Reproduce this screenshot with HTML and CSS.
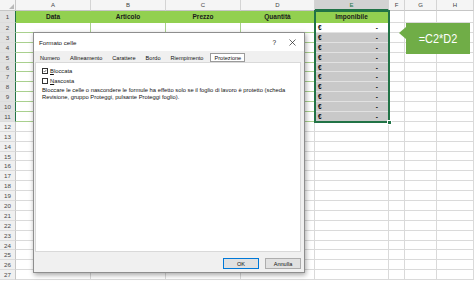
FILE: index.html
```html
<!DOCTYPE html>
<html lang="it">
<head>
<meta charset="utf-8">
<title>Formato celle</title>
<link rel="stylesheet" href="styles.css">
</head>
<body>
<div class="sheet">
  <div class="row hdr">
    <div class="rh corner"><span class="tri"></span></div>
    <div class="ch">A</div><div class="ch">B</div><div class="ch">C</div><div class="ch">D</div><div class="ch csel">E</div><div class="ch">F</div><div class="ch">G</div><div class="ch">H</div>
  </div>
  <div class="row r1">
    <div class="rh s">1</div>
    <div class="c g">Data</div><div class="c g">Articolo</div><div class="c g">Prezzo</div><div class="c g">Quantità</div><div class="c g">Imponibile</div><div class="c"></div><div class="c"></div><div class="c"></div>
  </div>
  <div class="row"><div class="rh s">2</div><div class="c t"></div><div class="c t"></div><div class="c t"></div><div class="c t"></div><div class="c e act"><span>€</span><span>-</span></div><div class="c"></div><div class="c"></div><div class="c"></div></div>
  <div class="row"><div class="rh s">3</div><div class="c t"></div><div class="c t"></div><div class="c t"></div><div class="c t"></div><div class="c e"><span>€</span><span>-</span></div><div class="c"></div><div class="c"></div><div class="c"></div></div>
  <div class="row"><div class="rh s">4</div><div class="c t"></div><div class="c t"></div><div class="c t"></div><div class="c t"></div><div class="c e"><span>€</span><span>-</span></div><div class="c"></div><div class="c"></div><div class="c"></div></div>
  <div class="row"><div class="rh s">5</div><div class="c t"></div><div class="c t"></div><div class="c t"></div><div class="c t"></div><div class="c e"><span>€</span><span>-</span></div><div class="c"></div><div class="c"></div><div class="c"></div></div>
  <div class="row"><div class="rh s">6</div><div class="c t"></div><div class="c t"></div><div class="c t"></div><div class="c t"></div><div class="c e"><span>€</span><span>-</span></div><div class="c"></div><div class="c"></div><div class="c"></div></div>
  <div class="row"><div class="rh s">7</div><div class="c t"></div><div class="c t"></div><div class="c t"></div><div class="c t"></div><div class="c e"><span>€</span><span>-</span></div><div class="c"></div><div class="c"></div><div class="c"></div></div>
  <div class="row"><div class="rh s">8</div><div class="c t"></div><div class="c t"></div><div class="c t"></div><div class="c t"></div><div class="c e"><span>€</span><span>-</span></div><div class="c"></div><div class="c"></div><div class="c"></div></div>
  <div class="row"><div class="rh s">9</div><div class="c t"></div><div class="c t"></div><div class="c t"></div><div class="c t"></div><div class="c e"><span>€</span><span>-</span></div><div class="c"></div><div class="c"></div><div class="c"></div></div>
  <div class="row"><div class="rh s">10</div><div class="c t"></div><div class="c t"></div><div class="c t"></div><div class="c t"></div><div class="c e"><span>€</span><span>-</span></div><div class="c"></div><div class="c"></div><div class="c"></div></div>
  <div class="row"><div class="rh s">11</div><div class="c t"></div><div class="c t"></div><div class="c t"></div><div class="c t"></div><div class="c e"><span>€</span><span>-</span></div><div class="c"></div><div class="c"></div><div class="c"></div></div>
  <div class="row"><div class="rh">12</div><div class="c"></div><div class="c"></div><div class="c"></div><div class="c"></div><div class="c"></div><div class="c"></div><div class="c"></div><div class="c"></div></div>
  <div class="row"><div class="rh">13</div><div class="c"></div><div class="c"></div><div class="c"></div><div class="c"></div><div class="c"></div><div class="c"></div><div class="c"></div><div class="c"></div></div>
  <div class="row"><div class="rh">14</div><div class="c"></div><div class="c"></div><div class="c"></div><div class="c"></div><div class="c"></div><div class="c"></div><div class="c"></div><div class="c"></div></div>
  <div class="row"><div class="rh">15</div><div class="c"></div><div class="c"></div><div class="c"></div><div class="c"></div><div class="c"></div><div class="c"></div><div class="c"></div><div class="c"></div></div>
  <div class="row"><div class="rh">16</div><div class="c"></div><div class="c"></div><div class="c"></div><div class="c"></div><div class="c"></div><div class="c"></div><div class="c"></div><div class="c"></div></div>
  <div class="row"><div class="rh">17</div><div class="c"></div><div class="c"></div><div class="c"></div><div class="c"></div><div class="c"></div><div class="c"></div><div class="c"></div><div class="c"></div></div>
  <div class="row"><div class="rh">18</div><div class="c"></div><div class="c"></div><div class="c"></div><div class="c"></div><div class="c"></div><div class="c"></div><div class="c"></div><div class="c"></div></div>
  <div class="row"><div class="rh">19</div><div class="c"></div><div class="c"></div><div class="c"></div><div class="c"></div><div class="c"></div><div class="c"></div><div class="c"></div><div class="c"></div></div>
  <div class="row"><div class="rh">20</div><div class="c"></div><div class="c"></div><div class="c"></div><div class="c"></div><div class="c"></div><div class="c"></div><div class="c"></div><div class="c"></div></div>
  <div class="row"><div class="rh">21</div><div class="c"></div><div class="c"></div><div class="c"></div><div class="c"></div><div class="c"></div><div class="c"></div><div class="c"></div><div class="c"></div></div>
  <div class="row"><div class="rh">22</div><div class="c"></div><div class="c"></div><div class="c"></div><div class="c"></div><div class="c"></div><div class="c"></div><div class="c"></div><div class="c"></div></div>
  <div class="row"><div class="rh">23</div><div class="c"></div><div class="c"></div><div class="c"></div><div class="c"></div><div class="c"></div><div class="c"></div><div class="c"></div><div class="c"></div></div>
  <div class="row"><div class="rh">24</div><div class="c"></div><div class="c"></div><div class="c"></div><div class="c"></div><div class="c"></div><div class="c"></div><div class="c"></div><div class="c"></div></div>
  <div class="row"><div class="rh">25</div><div class="c"></div><div class="c"></div><div class="c"></div><div class="c"></div><div class="c"></div><div class="c"></div><div class="c"></div><div class="c"></div></div>
  <div class="row"><div class="rh">26</div><div class="c"></div><div class="c"></div><div class="c"></div><div class="c"></div><div class="c"></div><div class="c"></div><div class="c"></div><div class="c"></div></div>
  <div class="row"><div class="rh">27</div><div class="c"></div><div class="c"></div><div class="c"></div><div class="c"></div><div class="c"></div><div class="c"></div><div class="c"></div><div class="c"></div></div>
</div>

<div class="selbox"><span class="handle"></span></div>

<div class="callout"><span class="formula">=C2*D2</span></div>

<div class="dialog">
  <div class="titlebar">
    <span class="title">Formato celle</span>
    <span class="help">?</span>
    <svg class="close" width="7" height="7" viewBox="0 0 7 7"><path d="M0.5 0.5L6.5 6.5M6.5 0.5L0.5 6.5" stroke="#222" stroke-width="0.7" fill="none"/></svg>
  </div>
  <div class="tabs">
    <span class="tab">Numero</span>
    <span class="tab">Allineamento</span>
    <span class="tab">Carattere</span>
    <span class="tab">Bordo</span>
    <span class="tab">Riempimento</span>
    <span class="tab on">Protezione</span>
  </div>
  <div class="panel">
    <label class="chk"><span class="box checked"><svg width="6" height="6" viewBox="0 0 6 6"><path d="M1 3.1L2.4 4.5L5 1.4" stroke="#111" stroke-width="0.8" fill="none"/></svg></span><span><u>B</u>loccata</span></label>
    <label class="chk"><span class="box"></span><span><u>N</u>ascosta</span></label>
    <p class="note">Bloccare le celle o nascondere le formule ha effetto solo se il foglio di lavoro è protetto (scheda<br>Revisione, gruppo Proteggi, pulsante Proteggi foglio).</p>
  </div>
  <div class="footer">
    <button class="btn ok">OK</button>
    <button class="btn">Annulla</button>
  </div>
</div>
</body>
</html>
```
FILE: styles.css
```css
* { box-sizing: border-box; margin: 0; padding: 0; }
html, body { width: 474px; height: 286px; overflow: hidden; background: #fff; }
body { position: relative; font-family: "Liberation Sans", Arial, sans-serif; color: #111; }

.sheet { display: flex; flex-direction: column; }
.row {
  display: grid;
  grid-template-columns: 16px 75px 75px 75px 74px 74px 16px 32px 37px;
  height: 9.9px;
}
.row.hdr { height: 11px; }
.row.r1 { height: 12px; }

.rh {
  background: #f0f0f0;
  border-right: 1px solid #c6c6c6;
  border-bottom: 1px solid #dcdcdc;
  color: #4a4a4a;
  font-size: 6.2px;
  display: flex; align-items: center; justify-content: center;
}
.rh.s { background: #e1e1e1; border-right: 1px solid #217346; }
.corner { position: relative; background: #f5f5f5; border-bottom: 1px solid #c6c6c6; }
.tri {
  position: absolute; right: 1px; bottom: 1px;
  width: 0; height: 0;
  border-left: 5px solid transparent; border-bottom: 5px solid #b9b9b9;
}
.ch {
  background: #f5f5f5;
  border-right: 1px solid #d4d4d4;
  border-bottom: 1px solid #c6c6c6;
  color: #444; font-size: 6px;
  display: flex; align-items: center; justify-content: center;
}
.ch.csel { background: #d2d2d2; color: #217346; border-bottom: 2px solid #217346; }

.c {
  border-right: 1px solid #dadada;
  border-bottom: 1px solid #dadada;
  font-size: 6.5px;
  display: flex; align-items: center;
}
.c.g {
  background: #92d050; border-color: #92d050;
  font-weight: bold; justify-content: center; color: #1a1a1a;
}
.c.t { border-color: #a9d08e; }
.c.e {
  background: #c9c9c9; border-color: #e2e2e2;
  justify-content: space-between; padding: 0 10px 0 3px;
  font-weight: bold;
}
.c.e.act { background: #fff; }

.selbox {
  position: absolute; left: 314px; top: 10px; width: 76px; height: 113px;
  border: 2px solid #217346;
}
.handle {
  position: absolute; right: -4px; bottom: -4px; width: 5px; height: 5px;
  background: #217346; border: 1px solid #fff;
}

.callout {
  position: absolute; left: 406px; top: 23px; width: 64px; height: 31px;
  background: #70ad47; color: #fff;
  display: flex; align-items: center; justify-content: center;
}
.callout::before {
  content: ""; position: absolute; left: -7px; top: 4px;
  border-right: 7px solid #70ad47;
  border-top: 6px solid transparent; border-bottom: 6px solid transparent;
}
.formula { font-size: 13px; display: inline-block; transform: scaleX(0.84); }

.dialog {
  position: absolute; left: 33px; top: 32px; width: 272px; height: 241px;
  background: #f0f0f0; border: 1px solid #8e8e8e;
  box-shadow: 1px 2px 5px rgba(0,0,0,0.35);
  display: flex; flex-direction: column;
  font-size: 5.6px; color: #111;
}
.titlebar {
  height: 18px; background: #fff;
  display: flex; align-items: center; padding: 0 8px 0 5px;
}
.title { font-size: 6.2px; flex: 1; }
.help { font-size: 6.5px; margin-right: 13px; }
.close { display: block; }

.tabs {
  height: 11px; display: flex; align-items: flex-end; padding-left: 1px;
}
.tab {
  height: 9px; line-height: 8px; padding: 0 4px; white-space: nowrap;
  border: 1px solid transparent;
}
.tab.on {
  background: #fff; border-color: #9b9b9b; padding: 0 3px; margin-left: 2px;
}
.panel {
  flex: 1; background: #fff; border: 1px solid #d9d9d9;
  margin: 0 3px 0 1px; padding: 4px 0 0 6px;
}
.chk { display: flex; align-items: center; height: 7px; margin-bottom: 3px; gap: 2px; font-size: 5.8px; }
.box {
  width: 6px; height: 6px; border: 0.8px solid #333; background: #fff;
  display: flex; align-items: center; justify-content: center;
}
.box svg { display: block; }
.note { margin-top: 3px; line-height: 6.6px; white-space: nowrap; font-size: 5.8px; }

.footer {
  height: 20px; display: flex; justify-content: flex-end; align-items: flex-end;
  gap: 6px; padding: 0 3px 3px 0;
}
.btn {
  width: 36px; height: 11px; font-family: inherit; font-size: 5.6px; color: #111;
  background: #e1e1e1; border: 1px solid #adadad;
}
.btn.ok { border-color: #0078d7; }
```
